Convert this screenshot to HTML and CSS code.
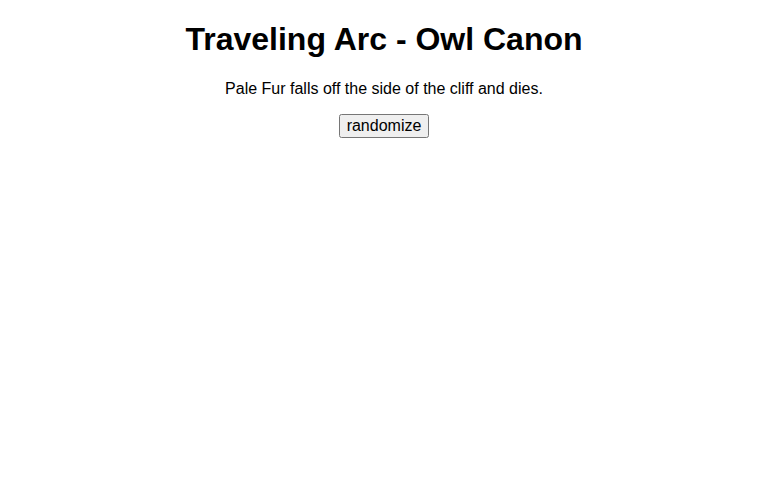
FILE: index.html
```html
<!DOCTYPE html>
<html lang="en">
<head>
    <meta charset="UTF-8">
    <title>Traveling Arc - Owl Canon</title>
    <link rel="stylesheet" href="styles.css">
</head>
<body>
    <div class="page">
        <h1>Traveling Arc - Owl Canon</h1>
        <p id="event">Pale Fur falls off the side of the cliff and dies.</p>
        <button id="randomize">randomize</button>
    </div>
</body>
</html>
```

FILE: styles.css
```css
body {
    font-family: 'Liberation Sans', Arial, sans-serif;
    margin: 0;
}

.page {
    text-align: center;
}

button {
    font-family: 'Liberation Sans', Arial, sans-serif;
    font-size: 16px;
}
```
